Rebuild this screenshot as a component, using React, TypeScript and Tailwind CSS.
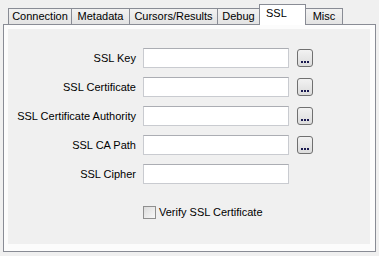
import React from "react";

const tabs = ["Connection", "Metadata", "Cursors/Results", "Debug", "SSL", "Misc"];
const widths = [64, 58, 88, 42, 45, 38];

function Row({ label, browse }: { label: string; browse?: boolean }) {
  return (
    <div className="flex items-center h-[20px]">
      <div className="w-[128px] text-right whitespace-nowrap leading-none text-[#000]">{label}</div>
      <div className="ml-[7px] w-[146px] h-[20px] bg-white border border-[#c9cbd0] border-t-[#abadb3]" />
      {browse && (
        <div className="ml-[8px] w-[16px] h-[18px] rounded-[3px] border border-[#707070] bg-gradient-to-b from-[#f2f2f2] to-[#dcdcdc] flex items-end justify-center pb-[3px]">
          <div className="flex gap-[1px]">
            <span className="w-[2px] h-[2px] bg-[#1a1a50]" />
            <span className="w-[2px] h-[2px] bg-[#1a1a50]" />
            <span className="w-[2px] h-[2px] bg-[#1a1a50]" />
          </div>
        </div>
      )}
    </div>
  );
}

export default function App() {
  return (
    <div
      className="w-[379px] h-[256px] bg-[#f0f0f0] pt-[4px] text-[11px] text-black overflow-hidden"
      style={{ fontFamily: '"Liberation Sans", Arial, sans-serif' }}
    >
      <div className="flex items-end h-[20px] pl-[8px] relative z-10">
        {tabs.map((t, i) => {
          const sel = t === "SSL";
          return sel ? (
            <div
              key={t}
              className="h-[21px] -mb-px -mx-[1px] border border-b-0 border-[#898c95] bg-white px-[6px] pt-[3px] leading-none whitespace-nowrap"
              style={{ width: widths[i] + 2 }}
            >
              {t}
            </div>
          ) : (
            <div
              key={t}
              className={`h-[16px] border border-b-0 border-[#898c95] bg-gradient-to-b from-[#f2f2f2] to-[#e3e3e3] flex items-center justify-center leading-none whitespace-nowrap ${i > 0 && tabs[i - 1] !== "SSL" ? "border-l-0" : ""}`}
              style={{ width: widths[i] }}
            >
              {t}
            </div>
          );
        })}
      </div>
      <div className="ml-[3px] w-[373px] h-[228px] border border-[#898c95] bg-[#fcfcfc] pl-[4px] pr-[5px] pt-[4px]">
        <div className="h-[215px] bg-[#f0f0f0] pt-[19px] flex flex-col">
          <div className="flex flex-col gap-[9px]">
            <Row label="SSL Key" browse />
            <Row label="SSL Certificate" browse />
            <Row label="SSL Certificate Authority" browse />
            <Row label="SSL CA Path" browse />
            <Row label="SSL Cipher" />
          </div>
          <div className="flex items-center mt-[22px] pl-[135px]">
            <div className="w-[13px] h-[13px] border border-[#8f8f8f] bg-gradient-to-br from-[#dcdcdc] to-[#f8f8f8]" />
            <span className="ml-[3px] leading-none whitespace-nowrap">Verify SSL Certificate</span>
          </div>
        </div>
      </div>
    </div>
  );
}
